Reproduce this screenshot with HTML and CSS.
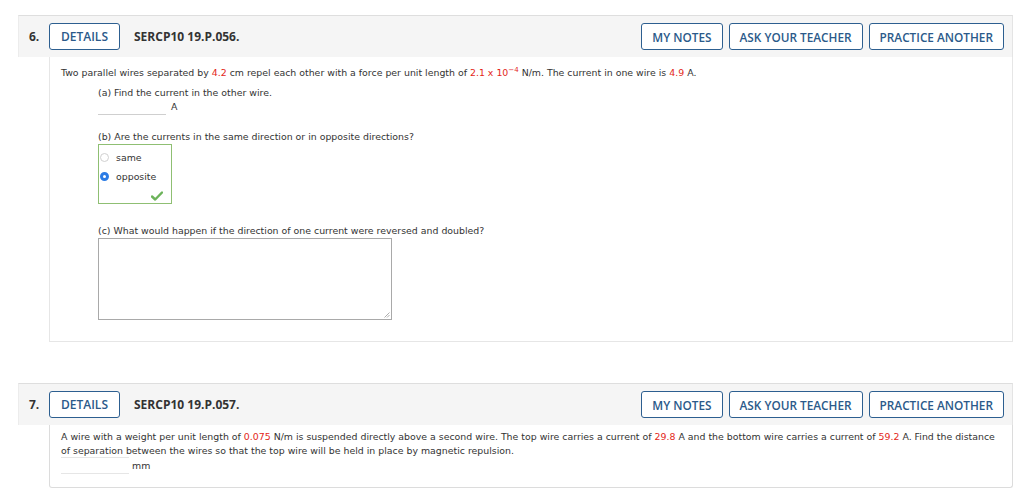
FILE: index.html
```html
<!DOCTYPE html>
<html>
<head>
<meta charset="utf-8">
<link rel="stylesheet" href="styles.css">
</head>
<body>
<div class="page">
  <section class="question q6">
    <header class="qhead">
      <span class="qnum">6.</span>
      <span class="btn details">DETAILS</span>
      <span class="qcode">SERCP10 19.P.056.</span>
      <span class="actions">
        <span class="btn">MY NOTES</span>
        <span class="btn">ASK YOUR TEACHER</span>
        <span class="btn">PRACTICE ANOTHER</span>
      </span>
    </header>
    <div class="qbody">
      <p class="stem">Two parallel wires separated by <span class="red">4.2</span> cm repel each other with a force per unit length of <span class="red">2.1 x 10<sup>&minus;4</sup></span> N/m. The current in one wire is <span class="red">4.9</span> A.</p>
      <div class="part parta">
        <p class="prompt">(a) Find the current in the other wire.</p>
        <div class="answer"><span class="blank"></span><span class="unit">A</span></div>
      </div>
      <div class="part partb">
        <p class="prompt">(b) Are the currents in the same direction or in opposite directions?</p>
        <div class="choices">
          <div class="choice"><span class="radio"></span>same</div>
          <div class="choice"><span class="radio on"></span>opposite</div>
          <svg class="check" width="12" height="10" viewBox="0 0 12 10"><path d="M1 5.5 L4.2 8.5 L11 1.5" fill="none" stroke="#6cb35a" stroke-width="2.4" stroke-linecap="round" stroke-linejoin="round"/></svg>
        </div>
      </div>
      <div class="part partc">
        <p class="prompt">(c) What would happen if the direction of one current were reversed and doubled?</p>
        <div class="textarea"><svg class="grip" width="6" height="6" viewBox="0 0 6 6"><path d="M5.5 0.5 L0.5 5.5 M5.5 3 L3 5.5" stroke="#999" stroke-width="0.8"/></svg></div>
      </div>
    </div>
  </section>

  <section class="question q7">
    <header class="qhead">
      <span class="qnum">7.</span>
      <span class="btn details">DETAILS</span>
      <span class="qcode">SERCP10 19.P.057.</span>
      <span class="actions">
        <span class="btn">MY NOTES</span>
        <span class="btn">ASK YOUR TEACHER</span>
        <span class="btn">PRACTICE ANOTHER</span>
      </span>
    </header>
    <div class="qbody body7">
      <p class="stem">A wire with a weight per unit length of <span class="red">0.075</span> N/m is suspended directly above a second wire. The top wire carries a current of <span class="red">29.8</span> A and the bottom wire carries a current of <span class="red">59.2</span> A. Find the distance of separation between the wires so that the top wire will be held in place by magnetic repulsion.</p>
      <div class="answer answer7"><span class="blank"></span><span class="unit">mm</span></div>
    </div>
  </section>
</div>
</body>
</html>
```
FILE: styles.css
```css
* { box-sizing: border-box; }
body {
  margin: 0;
  background: #fff;
  font-family: "DejaVu Sans", Verdana, sans-serif;
  color: #333;
}
p { margin: 0; }
.page {
  padding: 15px 11px 0 18px;
}
.question { margin-bottom: 41px; }
.question:last-child { margin-bottom: 0; }
.qhead {
  display: flex;
  align-items: center;
  height: 42px;
  background: #f5f5f5;
  border-top: 1px solid #dedede;
  border-left: 1px solid #ececec;
  border-right: 1px solid #e4e4e4;
  padding: 0 8px 0 10px;
  font-family: "Open Sans", sans-serif;
}
.qnum {
  width: 20px;
  font-size: 12px;
  font-weight: 700;
  color: #333;
}
.btn {
  display: inline-flex;
  align-items: center;
  height: 27px;
  padding: 0 10px;
  border: 1px solid #2d5f90;
  border-radius: 3px;
  background: #fff;
  color: #2b5a8a;
  font-size: 11.8px;
  font-weight: 600;
}
.details { padding: 0 11px; font-size: 12px; }
.qcode {
  margin-left: 14px;
  font-size: 12px;
  font-weight: 700;
  color: #333;
}
.actions {
  margin-left: auto;
  display: flex;
  gap: 6px;
}
.qbody {
  margin-left: 31px;
  background: #fff;
  border: 1px solid #e6e6e6;
  border-top: 0;
  padding: 9px 11px 0 11px;
  font-size: 9.4px;
  line-height: 14px;
  height: 285px;
}
.red { color: #e32619; }
sup { font-size: 7px; line-height: 0; vertical-align: 4px; }
.part { padding-left: 37px; }
.parta { margin-top: 6px; }
.answer {
  display: flex;
  align-items: flex-start;
  height: 16px;
}
.blank {
  width: 68px;
  height: 15px;
  border-bottom: 1px solid #cfcfcf;
}
.unit { margin-left: 5px; }
.partb { margin-top: 14px; }
.choices {
  position: relative;
  width: 74px;
  height: 60px;
  border: 1px solid #8fbf73;
  padding-top: 3px;
}
.choice {
  display: flex;
  align-items: center;
  height: 19px;
  padding-left: 1px;
}
.radio {
  width: 9px;
  height: 9px;
  border-radius: 50%;
  border: 1px solid #d0d0d0;
  background: #fff;
  margin-right: 7px;
}
.radio.on {
  border: 3px solid #2c7ce5;
  background: #fff;
}
.check {
  position: absolute;
  right: 8px;
  bottom: 2px;
}
.partc { margin-top: 20px; }
.textarea {
  position: relative;
  width: 294px;
  height: 82px;
  border: 1px solid #a9a9a9;
}
.grip { position: absolute; right: 1px; bottom: 1px; }
.body7 {
  height: 63px;
  padding-top: 5px;
  border-color: #dcdcdc;
  border-radius: 0 0 3px 3px;
}
.answer7 { margin-top: -1px; height: 17px; align-items: center; }
.answer7 .blank {
  width: 68px;
  height: 17px;
  border-top: 1px solid #e6e6e6;
  border-bottom: 1px solid #e6e6e6;
}
.answer7 .unit { margin-left: 3px; }
```
